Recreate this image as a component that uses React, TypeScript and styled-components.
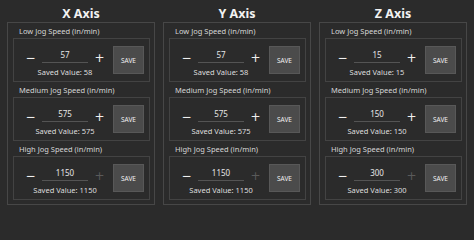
import styled, {createGlobalStyle} from "styled-components";

type Speed = {
    label: string,
    value: number,
    saved: number,
    canIncrease: boolean
}

type Axis = {
    name: string,
    speeds: Speed[]
}

const axes: Axis[] = [
    {
        name: "X Axis",
        speeds: [
            {label: "Low Jog Speed (in/min)", value: 57, saved: 58, canIncrease: true},
            {label: "Medium Jog Speed (in/min)", value: 575, saved: 575, canIncrease: true},
            {label: "High Jog Speed (in/min)", value: 1150, saved: 1150, canIncrease: false}
        ]
    },
    {
        name: "Y Axis",
        speeds: [
            {label: "Low Jog Speed (in/min)", value: 57, saved: 58, canIncrease: true},
            {label: "Medium Jog Speed (in/min)", value: 575, saved: 575, canIncrease: true},
            {label: "High Jog Speed (in/min)", value: 1150, saved: 1150, canIncrease: false}
        ]
    },
    {
        name: "Z Axis",
        speeds: [
            {label: "Low Jog Speed (in/min)", value: 15, saved: 15, canIncrease: true},
            {label: "Medium Jog Speed (in/min)", value: 150, saved: 150, canIncrease: true},
            {label: "High Jog Speed (in/min)", value: 300, saved: 300, canIncrease: false}
        ]
    }
];

function SpeedRow({speed}: {speed: Speed}) {
    return (
        <>
            <Label>{speed.label}</Label>
            <Card>
                <Step type="button">−</Step>
                <Middle>
                    <Value value={speed.value} readOnly/>
                    <Saved>Saved Value: {speed.saved}</Saved>
                </Middle>
                <Step type="button" $disabled={!speed.canIncrease}>+</Step>
                <SaveButton type="button">SAVE</SaveButton>
            </Card>
        </>
    );
}

function App() {
    return (
        <>
            <Global/>
            <Page>
                {axes.map(axis => (
                    <Column key={axis.name}>
                        <Title>{axis.name}</Title>
                        <Panel>
                            {axis.speeds.map(speed => (
                                <SpeedRow key={speed.label} speed={speed}/>
                            ))}
                        </Panel>
                    </Column>
                ))}
            </Page>
        </>
    );
}

const Global = createGlobalStyle`
  body {
    margin: 0;
    background: #2b2b2b;
    font-family: "Noto Sans", "Open Sans", sans-serif;
    color: #e4e4e4;
  }
`;

const Page = styled.div`
  display: flex;
  gap: 8px;
  padding: 0 7px;
  width: 474px;
  height: 215px;
  box-sizing: border-box;
`;

const Column = styled.div`
  width: 148px;
  display: flex;
  flex-direction: column;
`;

const Title = styled.div`
  height: 22px;
  padding-top: 6px;
  box-sizing: border-box;
  line-height: 16px;
  text-align: center;
  font-size: 12.5px;
  font-weight: 700;
  color: #f2f2f2;
`;

const Panel = styled.div`
  border: 1px solid #474747;
  padding: 0 4px 4px 5px;
  display: flex;
  flex-direction: column;
`;

const Label = styled.div`
  height: 15px;
  padding-left: 6px;
  line-height: 16px;
  font-size: 7.5px;
  color: #d6d6d6;
  white-space: nowrap;

  &:first-child {
    line-height: 17px;
  }
`;

const Card = styled.div`
  height: 44px;
  box-sizing: border-box;
  border: 1px solid #434343;
  padding: 0 5px 0 3px;
  display: grid;
  grid-template-columns: 27px 42px 27px 31px;
  align-items: center;
`;

const Step = styled.button<{ $disabled?: boolean }>`
  background: none;
  border: none;
  padding: 0;
  margin-top: -4px;
  font-family: "DejaVu Sans", sans-serif;
  font-size: 12px;
  line-height: 16px;
  color: ${p => p.$disabled ? "#5a5a5a" : "#f0f0f0"};
  text-align: center;
`;

const Middle = styled.div`
  align-self: start;
  padding-top: 7px;
  display: flex;
  flex-direction: column;
  align-items: center;
`;

const Value = styled.input`
  width: 46px;
  height: 17px;
  box-sizing: border-box;
  background: none;
  border: none;
  border-bottom: 1px solid #545454;
  padding: 0;
  text-align: center;
  font-family: inherit;
  font-size: 8px;
  color: #e6e6e6;
  outline: none;
`;

const Saved = styled.div`
  margin-top: 4px;
  line-height: 10px;
  font-size: 7.5px;
  white-space: nowrap;
  color: #dedede;
`;

const SaveButton = styled.button`
  width: 31px;
  height: 28px;
  padding: 0;
  background: #4b4b4b;
  border: 1px solid #585858;
  font-family: inherit;
  font-size: 6.5px;
  color: #f0f0f0;
`;

export default App;
